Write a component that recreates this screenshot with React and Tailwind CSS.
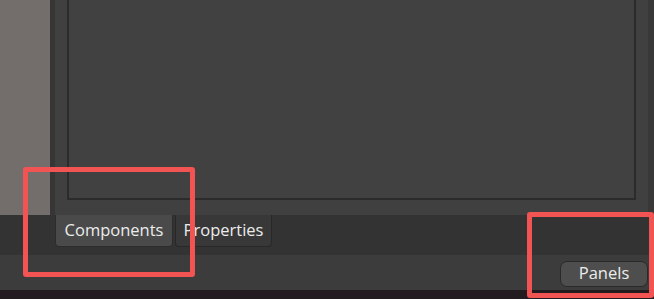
export default function App() {
  return (
    <div className="relative w-[654px] h-[299px] overflow-hidden bg-[#333333] font-['Open_Sans','Noto_Sans',sans-serif]">
      {/* top area */}
      <div className="flex h-[215px]">
        <div className="w-[50px] bg-[#736e6c]"></div>
        <div className="w-[5px] bg-[#363636]"></div>
        <div className="flex-1 bg-[#404040] px-[12px] pb-[15px]">
          <div className="h-full border-x-2 border-b-2 border-[#2b2b2b] bg-[#414141]"></div>
        </div>
        <div className="w-[6px] bg-[#383838]"></div>
      </div>

      {/* tab strip */}
      <div className="h-[40px] bg-[#333333] pl-[55px] flex items-start gap-[2px]">
        <div className="h-[32px] w-[118px] flex items-center justify-center bg-[#4a4a4a] border border-t-0 border-[#2c2c2c] rounded-b-[4px] text-[16.5px] text-[#ececec]">
          Components
        </div>
        <div className="h-[32px] w-[97px] flex items-center justify-center bg-[#383838] border border-t-0 border-[#282828] rounded-b-[4px] text-[16.5px] text-[#ececec]">
          Properties
        </div>
      </div>

      {/* bottom bar */}
      <div className="h-[35px] bg-[#3c3c3c] flex items-center justify-end pr-[6px]">
        <div className="mt-[2px] h-[26px] w-[88px] flex items-center justify-center bg-[#4e4e4e] border border-[#2a2a2a] rounded-[7px] text-[16.5px] text-[#ececec]">
          Panels
        </div>
      </div>

      <div className="h-[9px] bg-[#221c20]"></div>

      {/* annotations */}
      <div className="absolute left-[23px] top-[167px] w-[172px] h-[110px] border-[5px] border-[#f25454] rounded-[3px]"></div>
      <div className="absolute left-[527px] top-[212px] w-[127px] h-[86px] border-[5px] border-[#f25454] rounded-[3px]"></div>
    </div>
  );
}
